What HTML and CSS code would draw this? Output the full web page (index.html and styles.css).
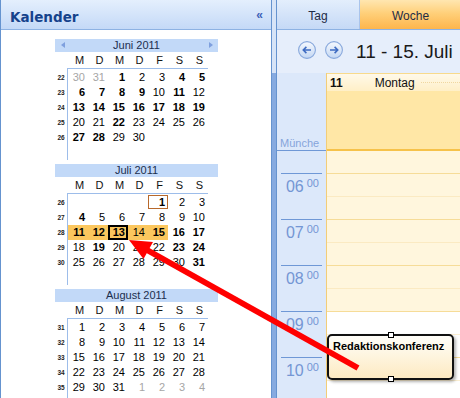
FILE: index.html
```html
<!DOCTYPE html>
<html lang="de">
<head>
<meta charset="utf-8">
<title>Kalender</title>
<link rel="stylesheet" href="styles.css">
</head>
<body>
<div class="app">
  <aside class="nav-pane">
    <div class="pane-head"><span class="pane-title">Kalender</span><span class="collapse">«</span></div>
    <div class="pane-body">
      <div class="month">
        <div class="mbar"><span class="prev"></span>Juni 2011<span class="next"></span></div>
        <div class="dow"><span>M</span><span>D</span><span>M</span><span>D</span><span>F</span><span>S</span><span>S</span></div>
        <div class="mbody">
          <div class="wks"><span>22</span><span>23</span><span>24</span><span>25</span><span>26</span></div>
          <div class="days">
            <div class="row"><span class="d o">30</span><span class="d o">31</span><span class="d b">1</span><span class="d">2</span><span class="d">3</span><span class="d b">4</span><span class="d b">5</span></div>
            <div class="row"><span class="d b">6</span><span class="d b">7</span><span class="d b">8</span><span class="d b">9</span><span class="d">10</span><span class="d b">11</span><span class="d">12</span></div>
            <div class="row"><span class="d b">13</span><span class="d b">14</span><span class="d b">15</span><span class="d b">16</span><span class="d b">17</span><span class="d b">18</span><span class="d b">19</span></div>
            <div class="row"><span class="d">20</span><span class="d">21</span><span class="d b">22</span><span class="d">23</span><span class="d">24</span><span class="d">25</span><span class="d">26</span></div>
            <div class="row"><span class="d b">27</span><span class="d b">28</span><span class="d">29</span><span class="d">30</span></div>
          </div>
        </div>
      </div>
      <div class="month">
        <div class="mbar">Juli 2011</div>
        <div class="dow"><span>M</span><span>D</span><span>M</span><span>D</span><span>F</span><span>S</span><span>S</span></div>
        <div class="mbody">
          <div class="wks"><span>26</span><span>27</span><span>28</span><span>29</span><span>30</span></div>
          <div class="days">
            <div class="row"><span class="d"></span><span class="d"></span><span class="d"></span><span class="d"></span><span class="d b today">1</span><span class="d">2</span><span class="d">3</span></div>
            <div class="row"><span class="d b">4</span><span class="d">5</span><span class="d">6</span><span class="d">7</span><span class="d">8</span><span class="d">9</span><span class="d">10</span></div>
            <div class="row sel"><span class="d b">11</span><span class="d b">12</span><span class="d b cur">13</span><span class="d">14</span><span class="d b">15</span><span class="d b">16</span><span class="d b">17</span></div>
            <div class="row"><span class="d">18</span><span class="d b">19</span><span class="d">20</span><span class="d">21</span><span class="d">22</span><span class="d b">23</span><span class="d b">24</span></div>
            <div class="row"><span class="d">25</span><span class="d">26</span><span class="d">27</span><span class="d">28</span><span class="d">29</span><span class="d">30</span><span class="d b">31</span></div>
          </div>
        </div>
      </div>
      <div class="month">
        <div class="mbar">August 2011</div>
        <div class="dow"><span>M</span><span>D</span><span>M</span><span>D</span><span>F</span><span>S</span><span>S</span></div>
        <div class="mbody">
          <div class="wks"><span>31</span><span>32</span><span>33</span><span>34</span><span>35</span></div>
          <div class="days">
            <div class="row"><span class="d">1</span><span class="d">2</span><span class="d">3</span><span class="d">4</span><span class="d">5</span><span class="d">6</span><span class="d">7</span></div>
            <div class="row"><span class="d">8</span><span class="d">9</span><span class="d">10</span><span class="d">11</span><span class="d">12</span><span class="d">13</span><span class="d">14</span></div>
            <div class="row"><span class="d">15</span><span class="d">16</span><span class="d">17</span><span class="d">18</span><span class="d">19</span><span class="d">20</span><span class="d">21</span></div>
            <div class="row"><span class="d">22</span><span class="d">23</span><span class="d">24</span><span class="d">25</span><span class="d">26</span><span class="d">27</span><span class="d">28</span></div>
            <div class="row"><span class="d">29</span><span class="d">30</span><span class="d">31</span><span class="d o">1</span><span class="d o">2</span><span class="d o">3</span><span class="d o">4</span></div>
          </div>
        </div>
      </div>
    </div>
  </aside>
  <div class="splitter"></div>
  <main class="view">
    <div class="tabs"><div class="tab">Tag</div><div class="tab active">Woche</div></div>
    <div class="navbar">
      <svg class="navbtn" width="18" height="18" viewBox="0 0 18 18"><defs><linearGradient id="bg1" x1="0" y1="0" x2="0" y2="1"><stop offset="0" stop-color="#f6f9fe"/><stop offset="1" stop-color="#c3d7f3"/></linearGradient></defs><circle cx="9" cy="9" r="8.4" fill="url(#bg1)" stroke="#88a8dc" stroke-width="1.1"/><path d="M13 9H5.3M8.4 5.9L5.3 9L8.4 12.1" stroke="#3f6cc2" stroke-width="1.6" fill="none"/></svg>
      <svg class="navbtn" width="18" height="18" viewBox="0 0 18 18"><circle cx="9" cy="9" r="8.4" fill="url(#bg1)" stroke="#88a8dc" stroke-width="1.1"/><path d="M5 9H12.7M9.6 5.9L12.7 9L9.6 12.1" stroke="#3f6cc2" stroke-width="1.6" fill="none"/></svg>
      <span class="range">11 - 15. Juli</span>
    </div>
    <div class="grid">
      <div class="timecol">
        <div class="tz">Münche</div>
        <div class="thalf"></div>
        <div class="hour"><span class="hh">06</span><span class="mm">00</span></div>
        <div class="hour"><span class="hh">07</span><span class="mm">00</span></div>
        <div class="hour"><span class="hh">08</span><span class="mm">00</span></div>
        <div class="hour"><span class="hh">09</span><span class="mm">00</span></div>
        <div class="hour"><span class="hh">10</span><span class="mm">00</span></div>
      </div>
      <div class="daycol">
        <div class="dayhead"><b>11</b><span class="dname">Montag</span><span class="dots"></span></div>
        <div class="allday"></div>
        <div class="dhalf"></div>
        <div class="dhour"></div>
        <div class="dhour"></div>
        <div class="dhour"></div>
        <div class="dhour work"></div>
        <div class="dhour work"></div>
        <div class="appt">
          <span class="handle top"></span>
          <span class="subject">Redaktionskonferenz</span>
          <span class="handle bottom"></span>
        </div>
      </div>
    </div>
  </main>
  <svg class="arrow" width="460" height="398" viewBox="0 0 460 398">
    <line x1="147" y1="250" x2="358" y2="368" stroke="#ff0000" stroke-width="6"/>
    <polygon points="129,240 153,242 143.5,259" fill="#ff0000"/>
  </svg>
</div>
</body>
</html>
```

FILE: styles.css
```css
* { box-sizing: border-box; margin: 0; padding: 0; }
html, body { width: 460px; height: 398px; overflow: hidden; }
body { font-family: "Liberation Sans", Arial, sans-serif; background: #fff; color: #000; }

.app { display: flex; height: 398px; position: relative; }

/* navigation pane */
.nav-pane { width: 272px; flex: none; border-left: 1px solid #6593cf; border-right: 1px solid #6593cf; background: #fff; }
.pane-head { height: 30px; border-bottom: 1px solid #8db2e3; background: linear-gradient(#e4effd, #c4d9f7); display: flex; align-items: center; justify-content: space-between; padding: 4px 8px 0 9px; }
.pane-title { font-family: "DejaVu Sans", sans-serif; font-weight: bold; font-size: 13.5px; color: #15428b; }
.collapse { font-size: 12px; color: #3d5fb8; font-weight: bold; margin-top: -4px; }
.pane-body { padding-top: 9px; }

.month { width: 163px; margin: 0 0 4px 54px; }
.mbar { height: 13px; background: #c2d9f8; position: relative; text-align: center; font-size: 11px; line-height: 13px; color: #1c2e4e; }
.prev, .next { position: absolute; top: 3px; width: 0; height: 0; border-top: 3.5px solid transparent; border-bottom: 3.5px solid transparent; }
.prev { left: 6px; border-right: 4px solid #7fa0de; }
.next { right: 5px; border-left: 4px solid #7fa0de; }
.dow { display: flex; height: 16px; padding-left: 13px; }
.dow span { width: 20px; text-align: center; padding-left: 3px; font-size: 11px; line-height: 17px; color: #111; }
.mbody { display: flex; }
.wks { width: 12px; padding-top: 2px; display: flex; flex-direction: column; }
.wks span { height: 15px; line-height: 15px; font-size: 6.5px; font-weight: bold; text-align: center; color: #222; }
.days { width: 141px; height: 92px; border-left: 1px solid #9dbdea; border-top: 1px solid #9dbdea; padding-top: 1px; }
.row { display: flex; height: 15px; }
.d { width: 20px; text-align: right; padding-right: 3px; font-size: 11px; line-height: 15px; color: #000; }
.d.b { font-weight: bold; }
.d.o { color: #a6a6a6; }
.row.sel .d:nth-child(-n+5) { background: #fbc75e; }
.d.today { border: 1px solid #b8692c; line-height: 13px; padding-right: 2px; height: 14px; }
.d.cur { border: 2px solid #000; line-height: 11px; padding-right: 1px; }

.splitter { width: 4px; flex: none; background: linear-gradient(to bottom, #d7e4f7 0, #d7e4f7 73px, #86aae0 73px, #86aae0 100%); }

/* main view */
.view { flex: 1; min-width: 0; border-left: 1px solid #6593cf; background: #e6eefb; display: flex; flex-direction: column; overflow: hidden; }
.tabs { display: flex; height: 30px; flex: none; border-bottom: 1px solid #8db2e3; }
.tab { width: 83px; flex: none; text-align: center; font-size: 12px; padding-top: 3px; line-height: 27px; color: #1e2b46; background: linear-gradient(#e3eefc, #c5d9f6); border-right: 1px solid #a9c4ec; }
.tab.active { width: 101px; border-right: none; background: linear-gradient(#ffe6b0 0%, #ffd07a 45%, #fdb54c 100%); }

.navbar { height: 43px; flex: none; display: flex; align-items: flex-start; padding: 11px 0 0 21px; }
.navbtn { flex: none; margin-right: 9px; }
.range { margin-left: 4px; font-size: 19px; line-height: 22px; color: #1a1a1a; white-space: nowrap; }

.grid { flex: 1; display: flex; }
.timecol { width: 49px; flex: none; background: #dce8fa; }
.tz { height: 78px; border-bottom: 1px solid #6f98d6; font-size: 11px; line-height: 13px; color: #86a4da; display: flex; align-items: flex-end; padding-left: 3px; white-space: nowrap; overflow: hidden; }
.thalf { height: 22px; }
.hour { height: 46px; margin: 0 4px; border-top: 1px solid #6f98d6; display: flex; justify-content: flex-end; align-items: flex-start; padding: 4px 3px 0 0; color: #7496d4; }
.hh { font-size: 16px; line-height: 18px; }
.mm { font-size: 11px; line-height: 11px; margin-left: 3px; }

.daycol { flex: 1; border-left: 1px solid #f2cd78; position: relative; background: #fff; }
.dayhead { height: 18px; border-top: 1px solid #f8da8c; background: linear-gradient(#fff9e9, #ffefc7); display: flex; align-items: center; padding-left: 3px; font-size: 12px; color: #111; }
.dayhead b { font-size: 12px; }
.dname { margin-left: 32px; }
.dots { flex: 1; margin: 0 0 0 6px; border-bottom: 1px dotted #f0d7a0; }
.allday { height: 60px; background: #ffe7a6; border-bottom: 2px solid #f6c24a; }
.dhalf { height: 22px; background: #fff6dd; }
.dhour { height: 46px; border-top: 1px solid #f6dc98; background: #fff6dd; position: relative; }
.dhour::after { content: ""; position: absolute; left: 0; right: 0; top: 22px; border-top: 1px solid #fbeac2; }
.dhour.work { background: #fff; }
.dhour.work::after { border-top-color: #fcefd2; }

.appt { position: absolute; left: 0; top: 261px; width: 127px; height: 46px; border: 2px solid #111; border-radius: 5px; background: linear-gradient(#fffef9, #fdeac2); box-shadow: 2px 2px 3px rgba(0, 0, 0, 0.3); padding: 3px 0 0 4px; }
.subject { display: block; font-size: 11px; line-height: 14px; font-weight: bold; color: #000; white-space: nowrap; }
.handle { position: absolute; left: 59px; width: 6px; height: 6px; background: #fff; border: 1px solid #000; }
.handle.top { top: -4px; }
.handle.bottom { bottom: -4px; }

.arrow { position: absolute; left: 0; top: 0; pointer-events: none; }
```
